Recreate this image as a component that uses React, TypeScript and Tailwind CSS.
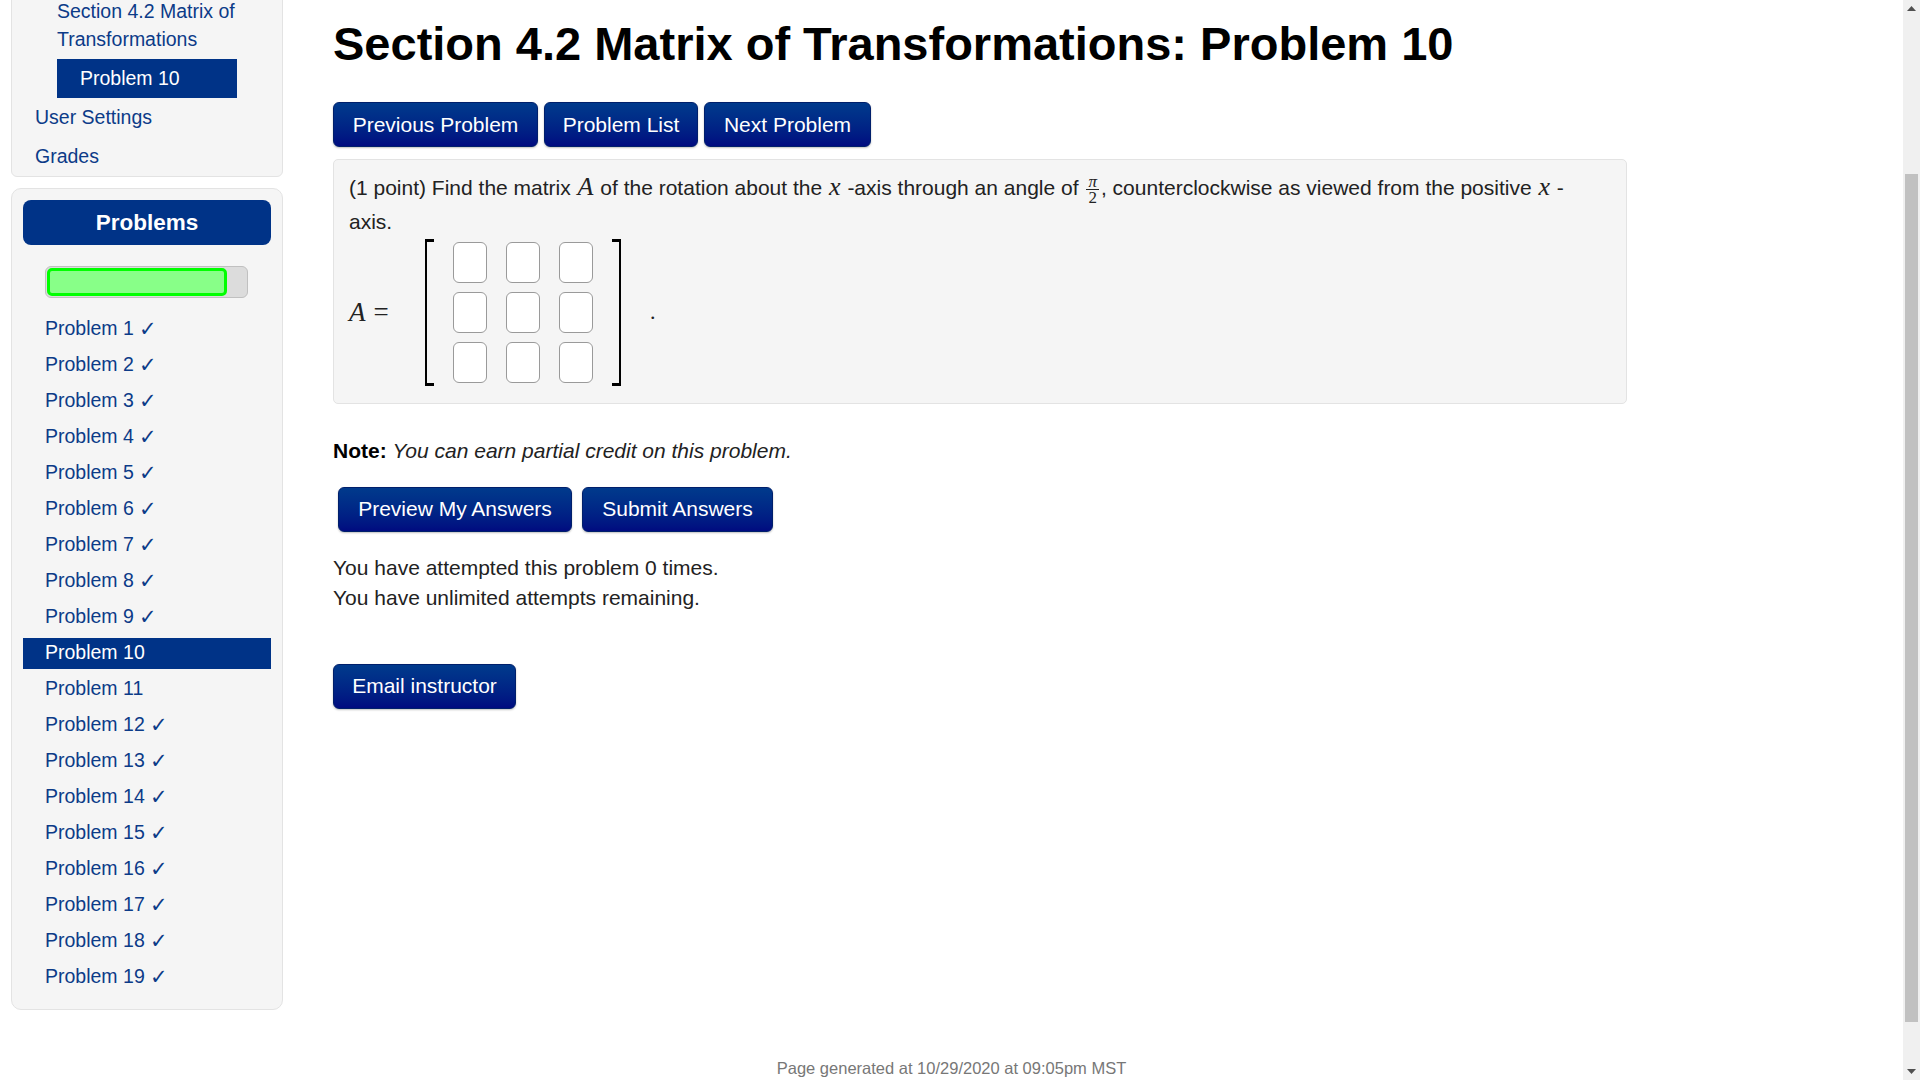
import { useLayoutEffect, useRef } from "react";

const problems = Array.from({ length: 19 }, (_, i) => ({
  n: i + 1,
  done: i + 1 !== 10 && i + 1 !== 11,
}));

function Btn({ w, children }: { w: string; children: React.ReactNode }) {
  return (
    <button
      className={`${w} h-[45px] rounded-[6px] border border-[#001f6b] bg-gradient-to-b from-[#003a8c] to-[#000a80] text-[21px] text-white shadow-[0_1px_2px_rgba(0,0,0,0.25)] flex items-center justify-center`}
    >
      {children}
    </button>
  );
}

// MathJax-ish italic letter
function M({ children }: { children: React.ReactNode }) {
  return <span className="font-['Liberation_Serif',serif] italic text-[26px] leading-none mx-[1px]">{children}</span>;
}

function Cell() {
  return <input className="w-[34px] h-[41px] rounded-[6px] border border-[#9a9a9a] bg-white" />;
}

export default function App() {
  const scroller = useRef<HTMLDivElement>(null);
  const anchor = useRef<HTMLDivElement>(null);

  // the page is shown scrolled down, with the active nav item near the top
  useLayoutEffect(() => {
    const s = scroller.current;
    const a = anchor.current;
    if (!s || !a) return;
    s.scrollTop = a.getBoundingClientRect().top - s.getBoundingClientRect().top + s.scrollTop - 59;
  }, []);

  return (
    <div className="flex h-screen w-full bg-white font-['Liberation_Sans',Arial,sans-serif] text-[#222]">
      <div
        ref={scroller}
        className="relative flex-1 overflow-y-scroll [scrollbar-width:none] [&::-webkit-scrollbar]:hidden"
      >
        {/* masthead, scrolled out of view */}
        <div className="h-[101px] flex flex-col">
          <div className="h-[61px] bg-[#003387] flex items-center px-[16px] text-white text-[28px] font-bold">
            WeBWorK
          </div>
          <div className="h-[40px] flex items-center px-[16px] text-[19px] text-[#0c3b88]">
            MATH 2270 / Section 4.2 Matrix of Transformations / 10
          </div>
        </div>

        <div className="flex items-start pl-[11px]">
          {/* sidebar */}
          <div className="w-[272px] shrink-0 flex flex-col gap-[11px] text-[19.5px] text-[#0c3b88]">
            <div className="rounded-[6px] border border-[#e3e3e3] bg-[#f5f5f5] pt-[9px]">
              <div className="h-[39px] flex items-center pl-[23px]">Courses</div>
              <div className="h-[39px] flex items-center pl-[23px]">Homework Sets</div>
              <div className="pl-[45px] pr-[10px] pt-[4px] pb-[6px] leading-[28px]">
                Section 4.2 Matrix of Transformations
              </div>
              <div className="pl-[45px]">
                <div
                  ref={anchor}
                  className="w-[180px] h-[39px] bg-[#003387] text-white flex items-center pl-[23px]"
                >
                  Problem 10
                </div>
              </div>
              <div className="h-[39px] flex items-center pl-[23px]">User Settings</div>
              <div className="h-[39px] flex items-center pl-[23px]">Grades</div>
            </div>

            <div className="rounded-[10px] border border-[#e3e3e3] bg-[#f5f5f5] px-[11px] pt-[11px] pb-[14px]">
              <div className="h-[45px] rounded-[8px] bg-[#003387] text-white font-bold text-[22.5px] flex items-center justify-center">
                Problems
              </div>
              <div className="mt-[21px] ml-[22px] w-[203px] h-[32px] rounded-[6px] border border-[#c0c0c0] bg-[#dcdcdc] p-[1px] flex">
                <div className="w-[180px] h-full rounded-[5px] border-[3px] border-[#00ff00] bg-[#88ff88]" />
              </div>
              <div className="mt-[13px] flex flex-col">
                {problems.map((p) => (
                  <div key={p.n} className="h-[36px] flex items-center">
                    <div
                      className={`w-full h-[31px] flex items-center pl-[22px] ${
                        p.n === 10 ? "bg-[#003387] text-white" : ""
                      }`}
                    >
                      Problem {p.n}
                      {p.done && (
                        <span className="ml-[5px] font-['DejaVu_Sans',sans-serif] font-light text-[21px] leading-none">
                          ✓
                        </span>
                      )}
                    </div>
                  </div>
                ))}
              </div>
            </div>
          </div>

          {/* main */}
          <div className="ml-[50px] w-[1294px] pt-[109px] text-[21px] leading-[30px]">
            <h2 className="m-0 text-[47px] leading-[60px] font-bold text-black">
              Section 4.2 Matrix of Transformations: Problem 10
            </h2>

            <div className="mt-[28px] flex gap-[6px]">
              <Btn w="w-[205px]">Previous Problem</Btn>
              <Btn w="w-[154px]">Problem List</Btn>
              <Btn w="w-[167px]">Next Problem</Btn>
            </div>

            <div className="mt-[12px] rounded-[5px] border border-[#e3e3e3] bg-[#f5f5f5] px-[15px] pt-[11px] pb-[17px]">
              <div className="leading-[33px]">
                (1 point) Find the matrix <M>A</M> of the rotation about the <M>x</M> -axis through an angle of{" "}
                <span className="inline-flex flex-col items-center align-middle font-['Liberation_Serif',serif] text-[17px] leading-[15px] mx-[2px]">
                  <span className="italic px-[2px]">π</span>
                  <span className="w-full h-[1px] bg-[#222]" />
                  <span className="px-[2px]">2</span>
                </span>
                , counterclockwise as viewed from the positive <M>x</M> -
                <br />
                axis.
              </div>

              <div className="mt-[1px] flex items-center">
                <div className="w-[76px] flex items-center gap-[8px] font-['Liberation_Serif',serif] text-[27px]">
                  <span className="italic">A</span>
                  <span>=</span>
                </div>
                <div className="w-[9px] h-[147px] border-l-2 border-t-[3px] border-b-[3px] border-black" />
                <div className="ml-[19px] grid grid-cols-[34px_34px_34px] gap-x-[19px] gap-y-[9px]">
                  {Array.from({ length: 9 }, (_, i) => (
                    <Cell key={i} />
                  ))}
                </div>
                <div className="ml-[19px] w-[9px] h-[147px] border-r-2 border-t-[3px] border-b-[3px] border-black" />
                <span className="ml-[29px] font-['Liberation_Serif',serif] text-[22px]">.</span>
              </div>
            </div>

            <div className="mt-[32px]">
              <span className="font-bold text-black">Note:</span> <i>You can earn partial credit on this problem.</i>
            </div>

            <div className="mt-[21px] ml-[5px] flex gap-[10px]">
              <Btn w="w-[234px]">Preview My Answers</Btn>
              <Btn w="w-[191px]">Submit Answers</Btn>
            </div>

            <div className="mt-[21px]">
              <div>You have attempted this problem 0 times.</div>
              <div>You have unlimited attempts remaining.</div>
            </div>

            <div className="mt-[51px]">
              <Btn w="w-[183px]">Email instructor</Btn>
            </div>
          </div>
        </div>

        <div className="mt-[46px] pb-[50px] text-center text-[16.5px] leading-[24px] text-[#777]">
          Page generated at 10/29/2020 at 09:05pm MST
        </div>
      </div>

      {/* window scrollbar */}
      <div className="w-[17px] shrink-0 bg-[#f0f0f0] flex flex-col">
        <div className="h-[17px] flex items-center justify-center">
          <svg width="9" height="5" viewBox="0 0 9 5">
            <polygon points="4.5,0 9,5 0,5" fill="#505050" />
          </svg>
        </div>
        <div className="flex-1 pt-[157px] px-[2px]">
          <div className="h-[848px] bg-[#c1c1c1]" />
        </div>
        <div className="h-[17px] flex items-center justify-center">
          <svg width="9" height="5" viewBox="0 0 9 5">
            <polygon points="0,0 9,0 4.5,5" fill="#505050" />
          </svg>
        </div>
      </div>
    </div>
  );
}
